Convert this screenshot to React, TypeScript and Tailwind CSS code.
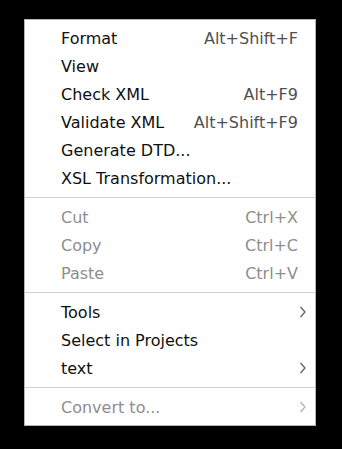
import React from "react";

type Item =
  | { type: "sep" }
  | { type: "item"; label: string; shortcut?: string; sub?: boolean; disabled?: boolean };

const items: Item[] = [
  { type: "item", label: "Format", shortcut: "Alt+Shift+F" },
  { type: "item", label: "View" },
  { type: "item", label: "Check XML", shortcut: "Alt+F9" },
  { type: "item", label: "Validate XML", shortcut: "Alt+Shift+F9" },
  { type: "item", label: "Generate DTD..." },
  { type: "item", label: "XSL Transformation..." },
  { type: "sep" },
  { type: "item", label: "Cut", shortcut: "Ctrl+X", disabled: true },
  { type: "item", label: "Copy", shortcut: "Ctrl+C", disabled: true },
  { type: "item", label: "Paste", shortcut: "Ctrl+V", disabled: true },
  { type: "sep" },
  { type: "item", label: "Tools", sub: true },
  { type: "item", label: "Select in Projects" },
  { type: "item", label: "text", sub: true },
  { type: "sep" },
  { type: "item", label: "Convert to...", sub: true, disabled: true },
];

function Chevron({ disabled }: { disabled?: boolean }) {
  return (
    <svg width="10" height="12" viewBox="0 0 10 12" className="shrink-0">
      <path
        d="M4.5 1 L9 6 L4.5 11"
        fill="none"
        stroke={disabled ? "#b0b0b0" : "#5a5a5a"}
        strokeWidth="1.2"
      />
    </svg>
  );
}

export default function App() {
  return (
    <div
      className="w-[342px] h-[449px] bg-black pl-[24px] pt-[19px]"
      style={{ fontFamily: '"DejaVu Sans", sans-serif' }}
    >
      <div className="w-[292px] bg-white border border-[#b4b4b4] py-[4px]">
        {items.map((it, i) =>
          it.type === "sep" ? (
            <div key={i} className="h-[11px] flex items-center">
              <div className="h-px w-full bg-[#cfcfcf]" />
            </div>
          ) : (
            <div
              key={i}
              className={`h-[28px] flex items-center pl-[36px] pr-[9px] text-[16px] leading-none ${
                it.disabled ? "text-[#8e8e8e]" : "text-[#101010]"
              }`}
            >
              <span className="flex-1 pt-[2px]">{it.label}</span>
              {it.shortcut && (
                <span
                  className={`mr-[8px] pt-[2px] ${it.disabled ? "text-[#8e8e8e]" : "text-[#505050]"}`}
                >
                  {it.shortcut}
                </span>
              )}
              {it.sub && <Chevron disabled={it.disabled} />}
            </div>
          )
        )}
      </div>
    </div>
  );
}
